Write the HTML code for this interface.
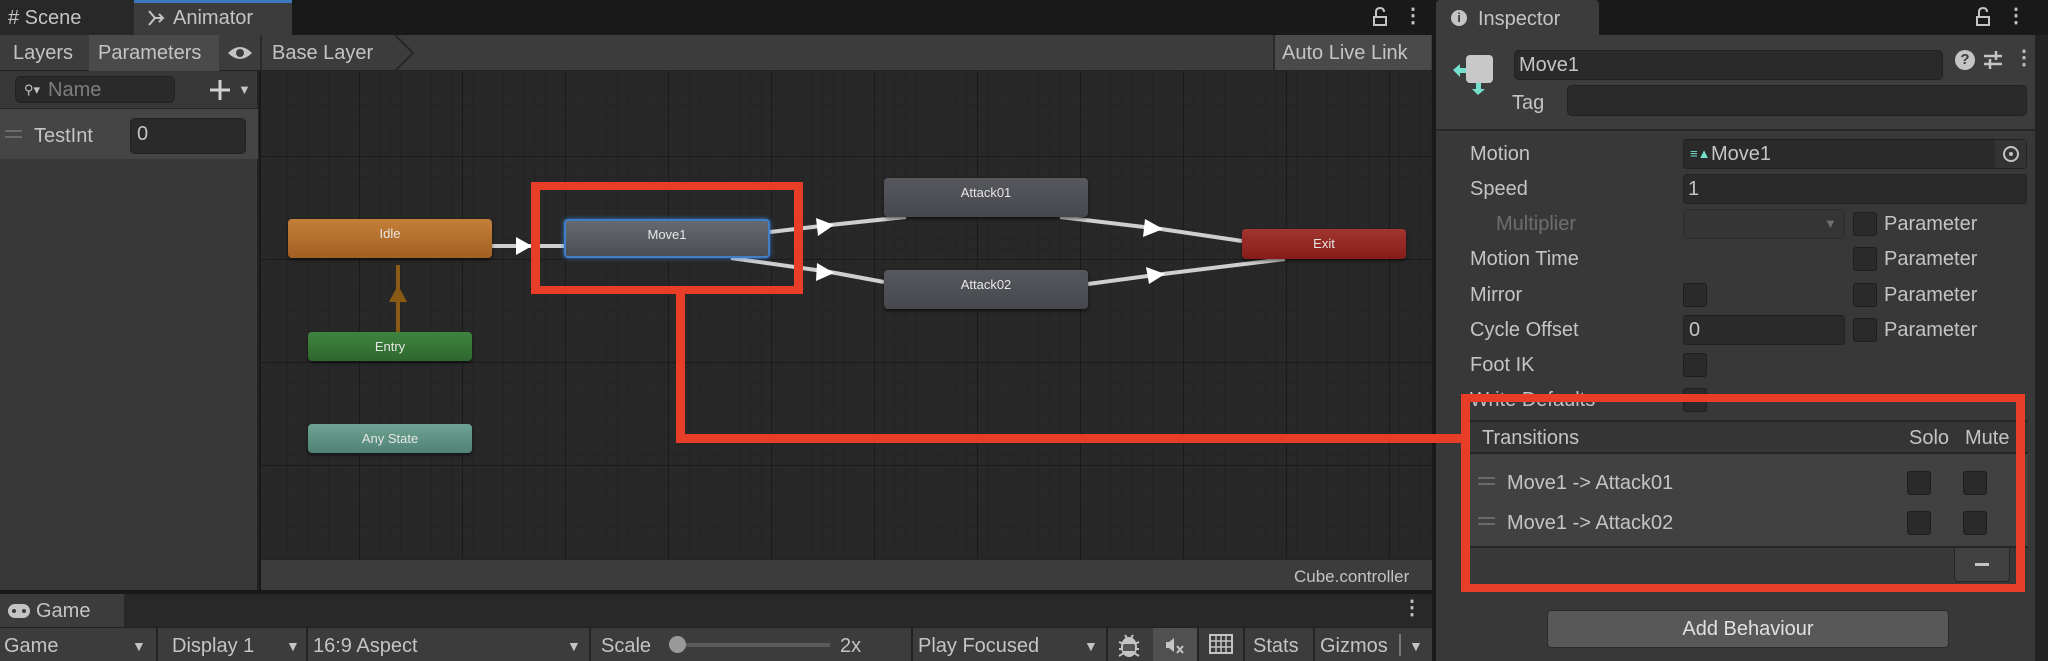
<!DOCTYPE html>
<html><head><meta charset="utf-8"><style>
*{box-sizing:border-box;margin:0;padding:0}
body{width:2048px;height:661px;background:#191919;position:relative;overflow:hidden;font-family:"Liberation Sans",sans-serif;color:#c4c4c4;font-size:20px}
.a{position:absolute}
.t{position:absolute;white-space:nowrap;line-height:1}
.fld{position:absolute;background:#2a2a2a;border:1px solid #212121;border-radius:4px}
.cb{position:absolute;width:24px;height:24px;background:#2a2a2a;border:1px solid #1e1e1e;border-radius:3px}
.node{position:absolute;border-radius:4px;color:#e6e6e6;font-size:13px;text-align:center;box-shadow:0 2px 3px rgba(0,0,0,.5)}
.red{position:absolute;background:#e83d26}
.sep{position:absolute;width:2px;background:#232323}
</style></head><body>
<!-- top tabs left -->
<div class="a" style="left:0;top:0;width:134px;height:35px;background:#282828"></div>
<div class="t" style="left:8px;top:8px;font-size:20px">#&nbsp;Scene</div>
<div class="a" style="left:134px;top:0;width:158px;height:35px;background:#3c3c3c;border-top:3px solid #3a79bb"></div>
<svg class="a" style="left:146px;top:8px" width="20" height="20" viewBox="0 0 20 20"><path d="M3 3 L9 10 L3 17 M9 10 H17 M13 6 L17 10 L13 14" stroke="#c4c4c4" stroke-width="2" fill="none"/></svg>
<div class="t" style="left:173px;top:8px">Animator</div>
<svg class="a" style="left:1372px;top:7px" width="16" height="20"><path d="M4 9 V5 Q4 1 8 1 Q12 1 12 5" stroke="#c4c4c4" stroke-width="2" fill="none"/><rect x="2" y="10" width="12" height="8" fill="none" stroke="#c4c4c4" stroke-width="2"/></svg>
<div class="t" style="left:1403px;top:6px;font-weight:bold">&#8942;</div>
<!-- toolbar -->
<div class="a" style="left:0;top:35px;width:1432px;height:36px;background:#3c3c3c;border-bottom:1px solid #232323"></div>
<div class="a" style="left:89px;top:35px;width:130px;height:36px;background:#4a4a4a"></div>
<div class="t" style="left:13px;top:43px">Layers</div>
<div class="t" style="left:98px;top:43px">Parameters</div>
<svg class="a" style="left:227px;top:44px" width="26" height="18" viewBox="0 0 26 18"><path d="M1 9 Q13 -3 25 9 Q13 21 1 9Z" fill="#c4c4c4"/><circle cx="13" cy="9" r="4" fill="#3c3c3c"/></svg>
<div class="a" style="left:260px;top:35px;width:2px;height:36px;background:#2a2a2a"></div>
<div class="t" style="left:272px;top:43px">Base Layer</div>
<svg class="a" style="left:395px;top:35px" width="22" height="36"><path d="M0 0 L18 18 L0 36" stroke="#262626" stroke-width="2" fill="none"/></svg>
<div class="a" style="left:1273px;top:35px;width:158px;height:35px;background:#4a4a4a;border-left:2px solid #2a2a2a"></div>
<div class="t" style="left:1282px;top:43px">Auto Live Link</div>
<!-- left params panel -->
<div class="a" style="left:0;top:71px;width:259px;height:519px;background:#383838;border-right:2px solid #232323"></div>
<div class="fld" style="left:15px;top:76px;width:160px;height:27px;border-radius:6px"></div>
<div class="t" style="left:24px;top:83px;font-size:13px">&#9906;&#9662;</div>
<div class="t" style="left:48px;top:80px;color:#7d7d7d">Name</div>
<svg class="a" style="left:207px;top:78px" width="26" height="24"><path d="M13 2V22M3 12H23" stroke="#d0d0d0" stroke-width="3"/></svg>
<div class="t" style="left:238px;top:83px;font-size:13px">&#9660;</div>
<div class="a" style="left:0;top:108px;width:258px;height:1px;background:#262626"></div>
<div class="a" style="left:0;top:109px;width:258px;height:50px;background:#454545"></div>
<div class="a" style="left:5px;top:130px;width:17px;height:2px;background:#6a6a6a"></div>
<div class="a" style="left:5px;top:136px;width:17px;height:2px;background:#6a6a6a"></div>
<div class="t" style="left:34px;top:126px">TestInt</div>
<div class="fld" style="left:130px;top:118px;width:116px;height:36px;border-radius:5px"></div>
<div class="t" style="left:137px;top:124px">0</div>
<!-- graph -->
<div class="a" style="left:261px;top:71px;width:1171px;height:488px;background-color:#282828;
background-image:linear-gradient(#1b1b1b 1px,transparent 1px),linear-gradient(90deg,#1b1b1b 1px,transparent 1px),linear-gradient(#242424 1px,transparent 1px),linear-gradient(90deg,#242424 1px,transparent 1px);
background-size:103px 103px,103px 103px,10.3px 10.3px,10.3px 10.3px;background-position:0 85px,98px 0,0 85px,98px 0"></div>
<svg class="a" style="left:0;top:0" width="1432" height="560">
<g stroke="#cfcfcf" stroke-width="4" fill="none">
<path d="M492 246 L564 246"/>
<path d="M770 232 L830 225 L906 217"/>
<path d="M731 258 L830 272 L884 282"/>
<path d="M1060 217 L1161 229 L1242 241"/>
<path d="M1088 284 L1163 274 L1285 259"/>
</g>
<g fill="#fff">
<path d="M532 246 L516 237 L516 255Z"/>
<path d="M834 225 L816 218 L818 236Z"/>
<path d="M834 273 L817 263 L816 281Z"/>
<path d="M1163 229 L1145 219 L1143 237Z"/>
<path d="M1165 274 L1146 267 L1149 284Z"/>
</g>
<path d="M398 265 L398 332" stroke="#8a5a14" stroke-width="4"/>
<path d="M398 285 L389 302 L407 302Z" fill="#8a5a14"/>
</svg>
<div class="node" style="left:288px;top:219px;width:204px;height:39px;background:linear-gradient(#c47f38,#a25f22);line-height:30px">Idle</div>
<div class="node" style="left:564px;top:219px;width:206px;height:39px;background:linear-gradient(#666970,#4c4e54);border:2px solid #3f7fc8;line-height:28px;box-shadow:0 0 5px #3f7fc8">Move1</div>
<div class="node" style="left:884px;top:178px;width:204px;height:39px;background:linear-gradient(#56585e,#46484d);line-height:30px">Attack01</div>
<div class="node" style="left:884px;top:270px;width:204px;height:39px;background:linear-gradient(#56585e,#46484d);line-height:30px">Attack02</div>
<div class="node" style="left:1242px;top:229px;width:164px;height:30px;background:linear-gradient(#a13530,#861c18);line-height:30px">Exit</div>
<div class="node" style="left:308px;top:332px;width:164px;height:29px;background:linear-gradient(#3f843f,#2e672e);line-height:29px">Entry</div>
<div class="node" style="left:308px;top:424px;width:164px;height:29px;background:linear-gradient(#6fa393,#4f8274);line-height:29px">Any State</div>
<!-- cube bar -->
<div class="a" style="left:261px;top:559px;width:1171px;height:31px;background:#3c3c3c;border-top:1px solid #262626"></div>
<div class="t" style="left:1294px;top:568px;font-size:17px">Cube.controller</div>
<!-- game panel -->
<div class="a" style="left:0;top:594px;width:1432px;height:33px;background:#282828"></div>
<div class="a" style="left:0;top:594px;width:124px;height:33px;background:#3c3c3c"></div>
<svg class="a" style="left:8px;top:604px" width="22" height="14"><rect x="0" y="0" width="22" height="14" rx="7" fill="#c4c4c4"/><circle cx="6" cy="7" r="2" fill="#3c3c3c"/><circle cx="16" cy="7" r="2" fill="#3c3c3c"/></svg>
<div class="t" style="left:36px;top:601px">Game</div>
<div class="t" style="left:1402px;top:598px;font-weight:bold">&#8942;</div>
<div class="a" style="left:0;top:627px;width:1432px;height:34px;background:#3c3c3c;border-top:1px solid #232323"></div>
<div class="t" style="left:4px;top:636px">Game</div><div class="t" style="left:132px;top:639px;font-size:14px">&#9660;</div>
<div class="sep" style="left:156px;top:628px;height:33px"></div>
<div class="t" style="left:172px;top:636px">Display 1</div><div class="t" style="left:286px;top:639px;font-size:14px">&#9660;</div>
<div class="sep" style="left:306px;top:628px;height:33px"></div>
<div class="t" style="left:313px;top:636px">16:9 Aspect</div><div class="t" style="left:567px;top:639px;font-size:14px">&#9660;</div>
<div class="sep" style="left:589px;top:628px;height:33px"></div>
<div class="t" style="left:601px;top:636px">Scale</div>
<div class="a" style="left:678px;top:643px;width:152px;height:4px;background:#5a5a5a"></div>
<div class="a" style="left:669px;top:636px;width:17px;height:17px;border-radius:50%;background:#999"></div>
<div class="t" style="left:840px;top:636px">2x</div>
<div class="sep" style="left:911px;top:628px;height:33px"></div>
<div class="t" style="left:918px;top:636px">Play Focused</div><div class="t" style="left:1084px;top:639px;font-size:14px">&#9660;</div>
<div class="sep" style="left:1106px;top:628px;height:33px"></div>
<svg class="a" style="left:1116px;top:632px" width="26" height="26"><ellipse cx="13" cy="15" rx="8" ry="10" fill="#c4c4c4"/><rect x="7" y="12" width="12" height="7" fill="#555"/><path d="M3 10L8 12M3 17H6M3 24L8 21M23 10L18 12M23 17H20M23 24L18 21M9 3L11 6M17 3L15 6" stroke="#c4c4c4" stroke-width="2"/></svg>
<div class="a" style="left:1153px;top:628px;width:44px;height:33px;background:#505050"></div>
<svg class="a" style="left:1165px;top:636px" width="22" height="20"><path d="M1 6H4L9 2V16L4 12H1Z" fill="#c4c4c4"/><path d="M12 10L18 17M18 10L12 17" stroke="#c4c4c4" stroke-width="2"/></svg>
<div class="sep" style="left:1197px;top:628px;height:33px"></div>
<svg class="a" style="left:1209px;top:634px" width="24" height="20"><rect x="1" y="1" width="22" height="18" fill="none" stroke="#c4c4c4" stroke-width="2"/><path d="M1 7H23M1 13H23M7 1V19M12 1V19M17 1V19" stroke="#c4c4c4" stroke-width="1.5"/></svg>
<div class="sep" style="left:1243px;top:628px;height:33px"></div>
<div class="t" style="left:1253px;top:636px">Stats</div>
<div class="sep" style="left:1313px;top:628px;height:33px"></div>
<div class="t" style="left:1320px;top:636px">Gizmos</div>
<div class="a" style="left:1399px;top:634px;width:2px;height:22px;background:#777"></div>
<div class="t" style="left:1409px;top:639px;font-size:14px">&#9660;</div>
<!-- inspector -->
<div class="a" style="left:1436px;top:0;width:163px;height:35px;background:#3c3c3c;border-radius:4px 4px 0 0"></div>
<div class="a" style="left:1451px;top:10px;width:16px;height:16px;border-radius:50%;background:#c4c4c4;color:#3c3c3c;font-size:13px;font-weight:bold;text-align:center;line-height:16px">i</div>
<div class="t" style="left:1478px;top:9px">Inspector</div>
<svg class="a" style="left:1975px;top:7px" width="16" height="20"><path d="M4 9 V5 Q4 1 8 1 Q12 1 12 5" stroke="#c4c4c4" stroke-width="2" fill="none"/><rect x="2" y="10" width="12" height="8" fill="none" stroke="#c4c4c4" stroke-width="2"/></svg>
<div class="t" style="left:2006px;top:6px;font-weight:bold">&#8942;</div>
<div class="a" style="left:1436px;top:35px;width:599px;height:96px;background:#3c3c3c;border-bottom:2px solid #262626"></div>
<div class="a" style="left:1436px;top:131px;width:599px;height:530px;background:#383838"></div>
<div class="a" style="left:2035px;top:35px;width:13px;height:626px;background:#232323"></div>
<div class="a" style="left:1466px;top:55px;width:27px;height:28px;border-radius:4px;background:#c8c8c8"></div>
<svg class="a" style="left:1451px;top:60px" width="45" height="40"><path d="M2 10 L9 4 V8 H15 V13 H9 V17Z" fill="#72e0cd"/><path d="M27 35 L21 29 H25 V23 H30 V29 H34Z" fill="#72e0cd"/></svg>
<div class="fld" style="left:1514px;top:50px;width:429px;height:30px;border-radius:5px"></div>
<div class="t" style="left:1519px;top:55px">Move1</div>
<div class="a" style="left:1955px;top:50px;width:20px;height:20px;border-radius:50%;background:#c4c4c4;color:#3c3c3c;font-size:15px;font-weight:bold;text-align:center;line-height:20px">?</div>
<svg class="a" style="left:1983px;top:50px" width="20" height="20"><path d="M1 6H19M1 14H19M13 1V10M7 9V19" stroke="#c4c4c4" stroke-width="2.5"/></svg>
<div class="t" style="left:2014px;top:48px;font-weight:bold">&#8942;</div>
<div class="t" style="left:1512px;top:93px">Tag</div>
<div class="fld" style="left:1567px;top:85px;width:460px;height:31px;border-radius:5px"></div>
<div class="t" style="left:1470px;top:144px">Motion</div>
<div class="fld" style="left:1683px;top:139px;width:344px;height:30px"></div>
<div class="a" style="left:1995px;top:140px;width:31px;height:28px;background:#333"></div>
<div class="a" style="left:2003px;top:146px;width:16px;height:16px;border-radius:50%;border:2px solid #c4c4c4"></div>
<div class="a" style="left:2009px;top:152px;width:4px;height:4px;border-radius:50%;background:#c4c4c4"></div>
<div class="t" style="left:1690px;top:147px;font-size:13px;color:#72e0cd">&#8801;&#9650;</div>
<div class="t" style="left:1711px;top:144px">Move1</div>
<div class="t" style="left:1470px;top:179px">Speed</div>
<div class="fld" style="left:1683px;top:174px;width:344px;height:30px"></div>
<div class="t" style="left:1688px;top:179px">1</div>
<div class="t" style="left:1496px;top:214px;color:#6e6e6e">Multiplier</div>
<div class="fld" style="left:1683px;top:209px;width:162px;height:30px;background:#353535;border-color:#2c2c2c"></div>
<div class="t" style="left:1824px;top:217px;font-size:13px;color:#6e6e6e">&#9660;</div>
<div class="cb" style="left:1853px;top:212px"></div><div class="t" style="left:1884px;top:214px">Parameter</div>
<div class="t" style="left:1470px;top:249px">Motion Time</div>
<div class="cb" style="left:1853px;top:247px"></div><div class="t" style="left:1884px;top:249px">Parameter</div>
<div class="t" style="left:1470px;top:285px">Mirror</div>
<div class="cb" style="left:1683px;top:283px"></div>
<div class="cb" style="left:1853px;top:283px"></div><div class="t" style="left:1884px;top:285px">Parameter</div>
<div class="t" style="left:1470px;top:320px">Cycle Offset</div>
<div class="fld" style="left:1683px;top:315px;width:162px;height:30px"></div>
<div class="t" style="left:1689px;top:320px">0</div>
<div class="cb" style="left:1853px;top:318px"></div><div class="t" style="left:1884px;top:320px">Parameter</div>
<div class="t" style="left:1470px;top:355px">Foot IK</div>
<div class="cb" style="left:1683px;top:353px"></div>
<div class="t" style="left:1470px;top:390px">Write Defaults</div>
<div class="cb" style="left:1683px;top:388px"></div>
<!-- transitions -->
<div class="a" style="left:1470px;top:420px;width:558px;height:34px;background:#353535;border-top:2px solid #262626;border-bottom:2px solid #262626"></div>
<div class="t" style="left:1482px;top:428px">Transitions</div>
<div class="t" style="left:1909px;top:428px">Solo</div>
<div class="t" style="left:1965px;top:428px">Mute</div>
<div class="a" style="left:1470px;top:454px;width:558px;height:94px;background:#414141;border-bottom:2px solid #262626"></div>
<div class="a" style="left:1478px;top:477px;width:17px;height:2px;background:#6a6a6a"></div><div class="a" style="left:1478px;top:483px;width:17px;height:2px;background:#6a6a6a"></div>
<div class="t" style="left:1507px;top:473px">Move1 -&gt; Attack01</div>
<div class="cb" style="left:1907px;top:471px"></div><div class="cb" style="left:1963px;top:471px"></div>
<div class="a" style="left:1478px;top:517px;width:17px;height:2px;background:#6a6a6a"></div><div class="a" style="left:1478px;top:523px;width:17px;height:2px;background:#6a6a6a"></div>
<div class="t" style="left:1507px;top:513px">Move1 -&gt; Attack02</div>
<div class="cb" style="left:1907px;top:511px"></div><div class="cb" style="left:1963px;top:511px"></div>
<div class="a" style="left:1954px;top:548px;width:56px;height:34px;background:#414141;border:1px solid #262626;border-top:none;border-radius:0 0 4px 4px"></div>
<div class="a" style="left:1975px;top:563px;width:14px;height:3px;background:#c4c4c4"></div>
<div class="a" style="left:1547px;top:610px;width:402px;height:38px;background:#585858;border:1px solid #2a2a2a;border-radius:4px;text-align:center;line-height:36px;color:#e0e0e0">Add Behaviour</div>
<!-- red annotation -->
<div class="red" style="left:531px;top:182px;width:272px;height:8px"></div>
<div class="red" style="left:531px;top:286px;width:272px;height:8px"></div>
<div class="red" style="left:531px;top:182px;width:9px;height:112px"></div>
<div class="red" style="left:794px;top:182px;width:9px;height:112px"></div>
<div class="red" style="left:676px;top:294px;width:9px;height:149px"></div>
<div class="red" style="left:676px;top:434px;width:790px;height:9px"></div>
<div class="red" style="left:1461px;top:394px;width:564px;height:8px"></div>
<div class="red" style="left:1461px;top:584px;width:564px;height:8px"></div>
<div class="red" style="left:1461px;top:394px;width:9px;height:198px"></div>
<div class="red" style="left:2016px;top:394px;width:9px;height:198px"></div>
</body></html>
